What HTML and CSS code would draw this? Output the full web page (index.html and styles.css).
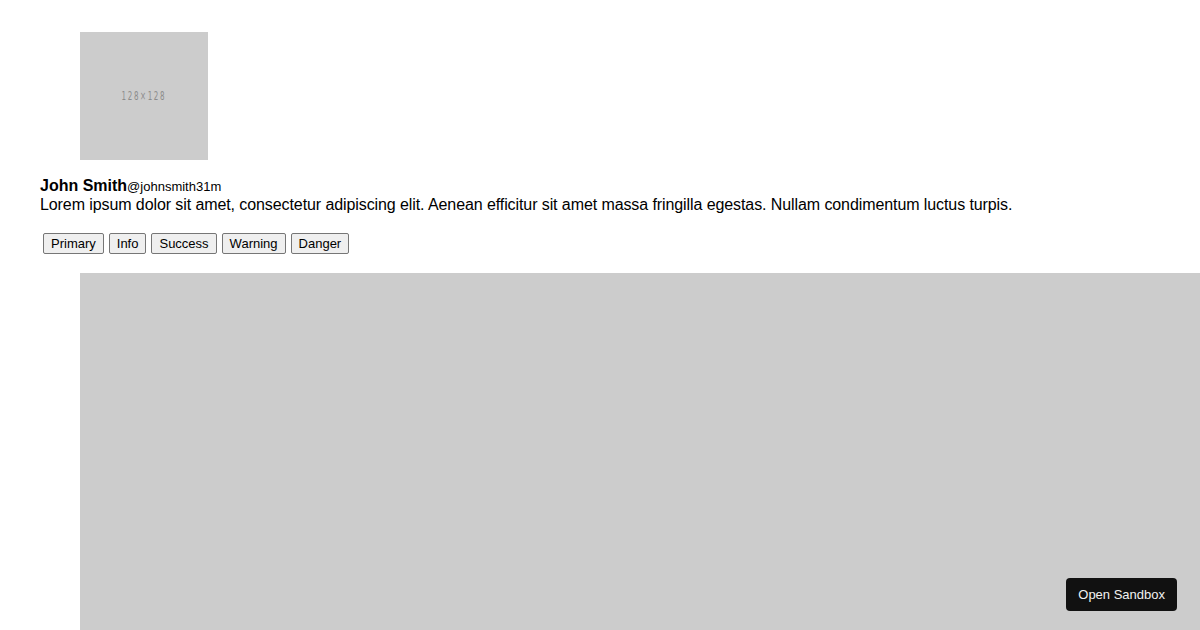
FILE: index.html
```html
<!DOCTYPE html>
<html>
<head>
    <meta charset="UTF-8">
    <title>Profile Card</title>
    <link rel="stylesheet" href="styles.css">
</head>
<body>
    <figure class="avatar">
        <div class="placeholder small"><span class="placeholder-label">128×128</span></div>
    </figure>

    <div class="profile">
        <div class="name-line">
            <strong class="name">John Smith</strong><span class="handle">@johnsmith31m</span>
        </div>
        <p class="bio">Lorem ipsum dolor sit amet, consectetur adipiscing elit. Aenean efficitur sit amet massa fringilla egestas. Nullam condimentum luctus turpis.</p>
    </div>

    <div class="actions">
        <button>Primary</button>
        <button>Info</button>
        <button>Success</button>
        <button>Warning</button>
        <button>Danger</button>
    </div>

    <figure class="cover">
        <div class="placeholder large"></div>
    </figure>

    <button class="sandbox-button">Open Sandbox</button>
</body>
</html>
```

FILE: styles.css
```css
html {
    overflow: hidden;
}
body {
    font-family: "Liberation Sans", Arial, sans-serif;
    margin: 0;
    padding: 16px 40px;
    color: #000;
}
.avatar {
    margin: 16px 40px;
}
.placeholder {
    background-color: #cccccc;
    display: flex;
    align-items: center;
    justify-content: center;
    color: #8c8c8c;
}
.placeholder.small {
    width: 128px;
    height: 128px;
}
.placeholder-label {
    font-family: "DejaVu Sans Condensed", "DejaVu Sans", sans-serif;
    font-size: 12px;
    letter-spacing: 2.5px;
    transform: scaleX(0.66);
    white-space: nowrap;
}
.placeholder.large {
    width: 1200px;
    height: 600px;
}
.profile {
    line-height: 18px;
    padding-top: 1px;
}
.name {
    font-size: 16px;
}
.handle {
    font-size: 13px;
}
.bio {
    margin: 0 0 19px;
    font-size: 16px;
    letter-spacing: -0.09px;
}
.actions {
    display: flex;
    gap: 5px;
    padding-left: 3px;
}
.actions button {
    font-family: "Liberation Sans", Arial, sans-serif;
    font-size: 13px;
    padding: 1px 7px;
    height: 21px;
    background-color: #efefef;
    border: 1px solid #767676;
    border-radius: 2px;
    color: #000;
}
.cover {
    margin: 19px 0 0 40px;
}
.sandbox-button {
    position: fixed;
    right: 23px;
    bottom: 19px;
    padding: 0 12px;
    height: 33px;
    background-color: #111111;
    color: #f2f2f2;
    border: none;
    border-radius: 4px;
    font-family: "Liberation Sans", Arial, sans-serif;
    font-size: 13px;
}
```
